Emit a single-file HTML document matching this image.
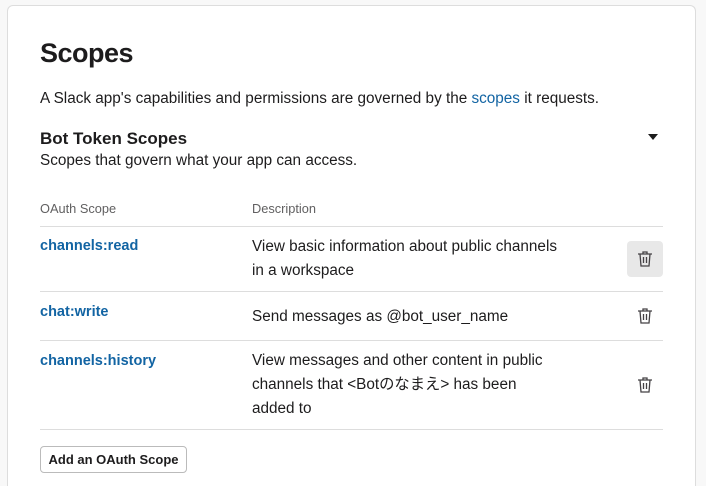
<!DOCTYPE html>
<html><head><meta charset="utf-8"><style>
html,body{margin:0;width:706px;height:486px;overflow:hidden}
body{background:#f8f8f8;font-family:"Liberation Sans","Noto Sans CJK JP",sans-serif;color:#1d1c1d;position:relative}
.card{position:absolute;left:7px;top:5px;width:687px;height:480px;background:#fff;border:1px solid #ddd;border-bottom:none;border-radius:6px 6px 0 0}
.a{position:absolute;white-space:nowrap}
.line{position:absolute;left:40px;width:623px;height:1px;background:#ddd}
.s{font-size:14.5px;font-weight:bold;color:#1264a3}
.d{font-size:15.3px;line-height:24px}
.t{position:absolute;left:627px;width:36px;height:36px;border-radius:4px}
</style></head><body>
<div class="card"></div>
<div class="a" style="left:40px;top:38px;font-size:27px;font-weight:bold;letter-spacing:-0.5px">Scopes</div>
<div class="a" style="left:40px;top:90px;font-size:15.3px">A Slack app's capabilities and permissions are governed by the <span style="color:#1264a3">scopes</span> it requests.</div>
<div class="a" style="left:40px;top:129px;font-size:17px;font-weight:bold">Bot Token Scopes</div>
<div class="a" style="left:40px;top:152px;font-size:15.3px">Scopes that govern what your app can access.</div>
<div class="a" style="left:648px;top:134px;width:0;height:0;border-left:5px solid transparent;border-right:5px solid transparent;border-top:6px solid #1d1c1d"></div>
<div class="a" style="left:40px;top:201px;font-size:12.8px;color:#616061">OAuth Scope</div>
<div class="a" style="left:252px;top:201px;font-size:12.8px;color:#616061">Description</div>
<div class="line" style="top:226px"></div>
<div class="a s" style="left:40px;top:238px">channels:read</div>
<div class="a d" style="left:252px;top:235px">View basic information about public channels<br>in a workspace</div>
<div class="t" style="top:241px;background:#e8e8e8"></div>
<div class="line" style="top:291px"></div>
<div class="a s" style="left:40px;top:304px">chat:write</div>
<div class="a d" style="left:252px;top:305px">Send messages as @bot_user_name</div>
<div class="line" style="top:340px"></div>
<div class="a s" style="left:40px;top:353px">channels:history</div>
<div class="a d" style="left:252px;top:349px">View messages and other content in public<br>channels that &lt;Botのなまえ&gt; has been<br>added to</div>
<div class="line" style="top:429px"></div>
<div class="a" style="left:40px;top:446px;width:145px;height:25px;border:1px solid #bbb;border-radius:4px;font-size:13px;font-weight:bold;text-align:center;line-height:25px">Add an OAuth Scope</div>
<svg class="a" style="left:636px;top:250px" width="18" height="18" viewBox="0 0 18 18" fill="none" stroke="#454245" stroke-width="1.3"><path d="M2 4h14M7 4V2h4v2M4 4l1 12h8l1-12M7.5 7v6M10.5 7v6"/></svg>
<svg class="a" style="left:636px;top:307px" width="18" height="18" viewBox="0 0 18 18" fill="none" stroke="#454245" stroke-width="1.3"><path d="M2 4h14M7 4V2h4v2M4 4l1 12h8l1-12M7.5 7v6M10.5 7v6"/></svg>
<svg class="a" style="left:636px;top:376px" width="18" height="18" viewBox="0 0 18 18" fill="none" stroke="#454245" stroke-width="1.3"><path d="M2 4h14M7 4V2h4v2M4 4l1 12h8l1-12M7.5 7v6M10.5 7v6"/></svg>
</body></html>
